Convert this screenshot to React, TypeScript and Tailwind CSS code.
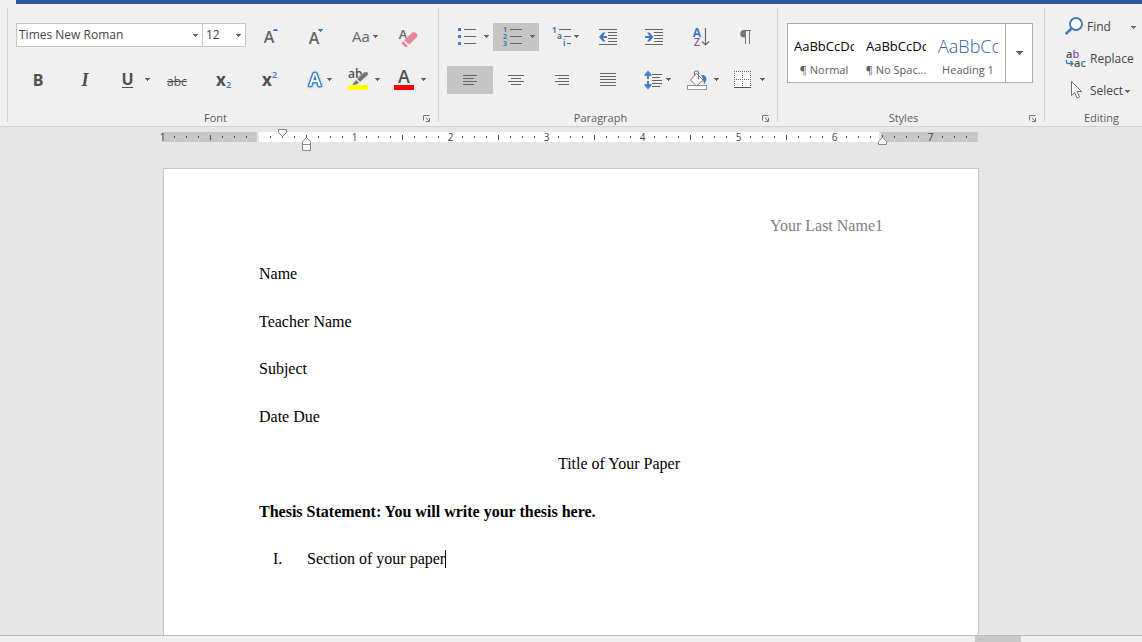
import type { ReactNode } from "react";

const INK = "#666666";
const BLUE = "#3f79b8";
const SANS = "'Open Sans', 'Noto Sans', sans-serif";

function Caret({ x, y = 12 }: { x: number; y?: number }) {
  return <path d={`M${x} ${y}h5v1h-1v1h-1v1h-1v-1h-1v-1h-1z`} fill="#666666" />;
}

function Bars({ rows }: { rows: number[][] }) {
  return (
    <>
      {rows.map(([x, y, w], i) => (
        <rect key={i} x={x} y={y} width={w} height={1} fill={INK} />
      ))}
    </>
  );
}

function Tool({ label, active = false, children }: { label: string; active?: boolean; children: ReactNode }) {
  return (
    <button
      type="button"
      aria-label={label}
      aria-pressed={active}
      className={active ? "h-7 w-[46px] shrink-0 bg-[#c5c5c5]" : "h-7 w-[46px] shrink-0 hover:bg-[#d8d8d8]"}
    >
      <svg viewBox="0 0 46 28" className="block h-7 w-[46px]" fontFamily={SANS} aria-hidden="true">
        {children}
      </svg>
    </button>
  );
}

function Divider() {
  return <div className="mt-1 h-[114px] w-px shrink-0 bg-[#d2d2d2]" />;
}

function GroupLabel({ name }: { name: string }) {
  return (
    <div className="mt-auto flex h-4 items-center pr-2">
      <span className="flex-1 text-center text-[11px] leading-4 text-[#5c5c5c]">{name}</span>
      <button type="button" aria-label={`${name} settings`} className="h-2 w-[7px]">
        <svg viewBox="0 0 7 8" className="block h-2 w-[7px]" aria-hidden="true">
          <path d="M.5 6.500V1.500H6.500M3 4l3 3M6.500 4v3.500H3" fill="none" stroke="#777777" />
        </svg>
      </button>
    </div>
  );
}

function FontGroup() {
  return (
    <section aria-label="Font" className="flex w-[430px] shrink-0 flex-col pt-[19px]">
      <div className="flex pl-2">
        <div className="relative h-6 w-[187px] border border-[#c6c6c6] bg-white">
          <select aria-label="Font name" className="block h-full w-full appearance-none pl-0.5 text-[12px] text-[#444444] outline-none">
            <option>Times New Roman</option>
          </select>
          <svg viewBox="0 0 5 3" className="pointer-events-none absolute right-1 top-2.5 h-[3px] w-[5px]" aria-hidden="true">
            <Caret x={0} y={0} />
          </svg>
        </div>
        <div className="relative mr-px h-6 w-[43px] border border-l-0 border-[#c6c6c6] bg-white">
          <select aria-label="Font size" className="block h-full w-full appearance-none pl-[3px] text-[12px] text-[#444444] outline-none">
            <option>12</option>
          </select>
          <svg viewBox="0 0 5 3" className="pointer-events-none absolute right-1 top-2.5 h-[3px] w-[5px]" aria-hidden="true">
            <Caret x={0} y={0} />
          </svg>
        </div>
        <Tool label="Increase font size">
          <text x="22" y="20" fontSize="16" fontWeight="600" fill={INK} textAnchor="middle">A</text>
          <path d="M26 8h5v-1h-1v-1h-3v1h-1z" fill={BLUE} />
        </Tool>
        <Tool label="Decrease font size">
          <text x="21" y="21" fontSize="16" fontWeight="600" fill={INK} textAnchor="middle">A</text>
          <path d="M25 6h5v1h-1v1h-1v1h-1v-1h-1v-1h-1z" fill={BLUE} />
        </Tool>
        <Tool label="Change case">
          <text x="13" y="19" fontSize="15" fontWeight="500" fill={INK}>Aa</text>
          <Caret x={34} />
        </Tool>
        <Tool label="Clear all formatting">
          <text x="18" y="16" fontSize="13" fontWeight="600" fill={INK} textAnchor="middle">A</text>
          <path d="M18.800 17.200L27.500 9h2.700l2.300 2.300v2.500l-8.200 8.200z" fill="#e8879b" stroke="#f0f0f0" strokeWidth=".6" />
          <path d="M18 18.200l4.800 4.900-.9.900h-1.800l-3.200-3.300v-1.400z" fill="#e8879b" />
        </Tool>
      </div>
      <div className="mt-[15px] flex pl-[7px]">
        <Tool label="Bold">
          <text x="23" y="20" fontSize="16" fontWeight="700" fill="#505050" textAnchor="middle">B</text>
        </Tool>
        <Tool label="Italic">
          <text x="24" y="20" fontSize="18" fontWeight="700" fontStyle="italic" fontFamily="'Liberation Serif', serif" fill="#505050" textAnchor="middle">I</text>
        </Tool>
        <Tool label="Underline">
          <text x="20.500" y="19" fontSize="16" fontWeight="700" fill="#505050" textAnchor="middle">U</text>
          <rect x="15" y="21" width="11" height="1" fill="#505050" />
          <Caret x={38} />
        </Tool>
        <Tool label="Strikethrough">
          <text x="24" y="20" fontSize="12" fill="#505050" textAnchor="middle">abc</text>
          <rect x="14" y="15" width="20" height="1" fill="#505050" />
        </Tool>
        <Tool label="Subscript">
          <text x="22" y="20" fontSize="17" fontWeight="700" fill="#505050" textAnchor="middle">x</text>
          <text x="27" y="22" fontSize="9" fontWeight="600" fill={BLUE}>2</text>
        </Tool>
        <Tool label="Superscript">
          <text x="22" y="20" fontSize="17" fontWeight="700" fill="#505050" textAnchor="middle">x</text>
          <text x="27" y="12" fontSize="9" fontWeight="600" fill={BLUE}>2</text>
        </Tool>
        <Tool label="Text effects">
          <g fontSize="18" fontWeight="600" textAnchor="middle" strokeLinejoin="round">
            <text x="24" y="20" fill="#ffffff" stroke="#3f7fc6" strokeWidth="2.600" paintOrder="stroke" className="drop-shadow-[0_0_1px_#7fb0e6]">A</text>
          </g>
          <Caret x={36} />
        </Tool>
        <Tool label="Text highlight color">
          <text x="11" y="12" fontSize="12" fontWeight="600" fill="#505050">ab</text>
          <path d="M27.500 6h3.500v3l-8 7-3-3z" fill="#707070" stroke="#f0f0f0" strokeWidth=".5" />
          <path d="M19.200 14l2.800 2.800-3 1.700-3.800.3z" fill="#707070" />
          <rect x="11" y="19" width="20" height="5" fill="#ffff00" />
          <Caret x={38} />
        </Tool>
        <Tool label="Font color">
          <text x="21" y="17" fontSize="18" fontWeight="600" fill="#505050" textAnchor="middle">A</text>
          <rect x="11" y="19" width="20" height="5" fill="#ff0000" />
          <Caret x={38} />
        </Tool>
      </div>
      <GroupLabel name="Font" />
    </section>
  );
}

function ParagraphGroup() {
  return (
    <section aria-label="Paragraph" className="flex w-[338px] shrink-0 flex-col pt-[19px]">
      <div className="flex pl-2">
        <Tool label="Bullets">
          {[5, 12, 19].map((y) => (
            <rect key={y} x="11" y={y} width="3" height="3" rx=".6" fill={BLUE} />
          ))}
          <Bars rows={[[17, 6, 12], [17, 13, 12], [17, 20, 12]]} />
          <Caret x={37} />
        </Tool>
        <Tool label="Numbering" active>
          <g fontSize="7" fontWeight="700" fill={BLUE}>
            <text x="10" y="9">1</text>
            <text x="10" y="16">2</text>
            <text x="10" y="23">3</text>
          </g>
          <Bars rows={[[17, 6, 12], [17, 13, 12], [17, 20, 12]]} />
          <Caret x={37} />
        </Tool>
        <Tool label="Multilevel list">
          <g fontSize="8" fontWeight="700" fill={BLUE}>
            <text x="13" y="10">1</text>
            <text x="18" y="16">a</text>
            <text x="24" y="23">i</text>
          </g>
          <Bars rows={[[20, 6, 12], [25, 13, 7], [28, 20, 4]]} />
          <Caret x={35} />
        </Tool>
        <Tool label="Decrease indent">
          <Bars rows={[[14, 6, 18], [23, 9, 9], [23, 12, 9], [23, 15, 9], [23, 18, 9], [14, 21, 18]]} />
          <path d="M14 14l4-4.500h2.500L18 13h4v2h-4l2.500 3.500H18z" fill={BLUE} />
        </Tool>
        <Tool label="Increase indent">
          <Bars rows={[[14, 6, 18], [23, 9, 9], [23, 12, 9], [23, 15, 9], [23, 18, 9], [14, 21, 18]]} />
          <path d="M22.500 14l-4-4.500H16l2.500 3.500H14v2h4.500L16 18.500h2.500z" fill={BLUE} />
        </Tool>
        <Tool label="Sort">
          <text x="20" y="14" fontSize="12" fontWeight="700" fill={BLUE} textAnchor="middle">A</text>
          <text x="20" y="23" fontSize="11" fontWeight="600" fill="#8a56b0" textAnchor="middle">Z</text>
          <path d="M28.500 5v17M25 18.500l3.500 3.500 3.500-3.500" fill="none" stroke={INK} strokeWidth="1.200" />
        </Tool>
        <Tool label="Show formatting marks">
          <path d="M22 7v7.500h-1a3.700 3.700 0 0 1 0-7.500z" fill="#777777" />
          <path d="M20 7.500h8M22.500 7v14M26.500 7v14" fill="none" stroke="#777777" />
        </Tool>
      </div>
      <div className="mt-[15px] flex pl-2">
        <Tool label="Align left" active>
          <Bars rows={[[16, 9, 14], [16, 12, 11], [16, 15, 14], [16, 18, 11]]} />
        </Tool>
        <Tool label="Center">
          <Bars rows={[[15, 9, 16], [18, 12, 10], [15, 15, 16], [18, 18, 10]]} />
        </Tool>
        <Tool label="Align right">
          <Bars rows={[[16, 9, 14], [19, 12, 11], [16, 15, 14], [19, 18, 11]]} />
        </Tool>
        <Tool label="Justify">
          <Bars rows={[[15, 7, 16], [15, 10, 16], [15, 13, 16], [15, 16, 16], [15, 19, 16]]} />
        </Tool>
        <Tool label="Line spacing">
          <path d="M17 4.500l3.500 4v1.500H18V13h-2v-3h-2.500V8.500zM17 23.500l3.500-4V18H18v-3h-2v3h-2.500v1.500z" fill="#4b7ec4" />
          <Bars rows={[[21, 8, 10], [21, 11, 8], [21, 14, 10], [21, 17, 10], [21, 20, 8]]} />
          <Caret x={35} />
        </Tool>
        <Tool label="Shading">
          <path d="M24 9c4-.5 6.500 2 5 6l-2 3.500c-.3-3-.8-6-3-9.500z" fill="#3f79b8" />
          <path d="M19.500 7.500l6.500 6.500-6.500 6-6-6z" fill="#ffffff" stroke="#777777" />
          <path d="M17.500 9.500v-3q0-1.500 2-1.500t2 1.500v7" fill="none" stroke="#777777" strokeWidth="1.200" />
          <rect x="10.500" y="19.500" width="19" height="4" fill="#ffffff" stroke="#999999" />
          <Caret x={37} />
        </Tool>
        <Tool label="Borders">
          <rect x="11" y="5" width="17" height="16" fill="#ffffff" />
          <path d="M11 5.500h17M11 13.500h17M11.500 5v16M19.500 5v16M27.500 5v16" fill="none" stroke="#666666" strokeDasharray="1 1" />
          <rect x="11" y="21" width="17" height="1" fill="#505050" />
          <Caret x={37} />
        </Tool>
      </div>
      <GroupLabel name="Paragraph" />
    </section>
  );
}

function StyleCard({ name, heading = false }: { name: string; heading?: boolean }) {
  return (
    <button type="button" className="flex w-[72px] shrink-0 flex-col items-center px-1.5 pt-3">
      <span
        className={
          heading
            ? "block h-5 w-full overflow-hidden whitespace-nowrap text-left text-[18px] font-light leading-5 text-[#2f5fae]"
            : "block h-5 w-full overflow-hidden whitespace-nowrap text-left text-[13px] leading-5 text-black"
        }
      >
        AaBbCcDc
      </span>
      <span className="mt-1.5 whitespace-nowrap text-[11px] leading-4 text-[#5c5c5c]">{name}</span>
    </button>
  );
}

function StylesGroup() {
  return (
    <section aria-label="Styles" className="flex w-[266px] shrink-0 flex-col pt-[19px]">
      <div className="ml-[9px] flex h-[60px] w-[246px] border border-[#acacac] bg-white">
        <StyleCard name="¶ Normal" />
        <StyleCard name="¶ No Spac..." />
        <StyleCard name="Heading 1" heading />
        <button type="button" aria-label="More styles" className="ml-px flex flex-1 items-center justify-center border-l border-[#acacac]">
          <svg viewBox="0 0 7 4" className="h-1 w-[7px]" aria-hidden="true">
            <path d="M0 0h7v1h-1v1h-1v1h-1v1h-1v-1h-1v-1h-1v-1h-1z" fill="#666666" />
          </svg>
        </button>
      </div>
      <GroupLabel name="Styles" />
    </section>
  );
}

function EditingGroup() {
  return (
    <section aria-label="Editing" className="flex min-w-[97px] flex-1 flex-col pl-5 pt-[7px] text-[12px] text-[#444444]">
      <button type="button" className="flex h-8 items-center">
        <svg viewBox="0 0 22 24" className="h-6 w-[22px]" aria-hidden="true">
          <circle cx="11" cy="9" r="6" fill="#ffffff" stroke={BLUE} strokeWidth="1.800" />
          <path d="M6.500 13.500L.8 19" stroke={BLUE} strokeWidth="2.500" />
        </svg>
        Find
        <svg viewBox="0 0 5 3" className="ml-5 h-[3px] w-[5px]" aria-hidden="true">
          <Caret x={0} y={0} />
        </svg>
      </button>
      <button type="button" className="flex h-8 items-center">
        <svg viewBox="0 0 25 24" className="h-6 w-[25px]" fontFamily={SANS} fontSize="11" fontWeight="600" aria-hidden="true">
          <text x="1" y="11" fill="#505050">
            a<tspan fill="#8a56b0">b</tspan>
          </text>
          <text x="9" y="20" fill="#505050">
            a<tspan fill={BLUE}>c</tspan>
          </text>
          <path d="M1.500 13v2.500q0 1 1.500 1h5M5.500 14l2.500 2.500L5.500 19" fill="none" stroke={BLUE} strokeWidth="1.300" />
        </svg>
        Replace
      </button>
      <button type="button" className="flex h-8 items-center">
        <svg viewBox="0 0 25 24" className="h-6 w-[25px]" aria-hidden="true">
          <path d="M6.500 2.500v14l3.200-3 2.300 5.500 2.500-1-2.300-5.500h4.300z" fill="#ffffff" stroke="#707070" />
        </svg>
        Select
        <svg viewBox="0 0 5 3" className="ml-0.5 h-[3px] w-[5px]" aria-hidden="true">
          <Caret x={0} y={0} />
        </svg>
      </button>
      <div className="mr-1 mt-auto h-4 text-center text-[11px] leading-4 text-[#5c5c5c]">Editing</div>
    </section>
  );
}

function Ruler() {
  const ticks = Array.from({ length: 68 }, (_, i) => i);
  return (
    <div className="relative mx-auto w-[818px] shrink-0 pr-0.5" aria-label="Ruler">
      <div className="flex h-2.5 bg-[#c6c6c6] pl-[95px] pr-[97px]">
        <div className="flex-1 border-x-2 border-[#e6e6e6] bg-white" />
      </div>
      <div className="absolute -left-1.5 top-0 flex h-2.5 items-center">
        {ticks.map((i) => (
          <div key={i} className="flex w-3 justify-center pl-px">
            {i % 8 === 0 ? (
              <span className="text-[10px] font-medium leading-[10px] text-[#444444]">
                {i === 8 ? "" : Math.abs(i / 8 - 1)}
              </span>
            ) : (
              <span className={i % 8 === 4 ? "h-[5px] w-px bg-[#505050]" : "h-0.5 w-px bg-[#505050]"} />
            )}
          </div>
        ))}
      </div>
      <svg viewBox="0 0 9 8" className="absolute -top-[3px] left-[116px] h-2 w-[9px]" aria-hidden="true">
        <path d="M.5.5h8v3l-4 4-4-4z" fill="#ffffff" stroke="#888888" />
      </svg>
      <svg viewBox="0 0 9 14" className="absolute left-[140px] top-[5px] h-3.5 w-[9px]" aria-hidden="true">
        <path d="M4.500.5l4 4v9h-8v-9zM.5 7.500h8" fill="#ffffff" stroke="#888888" />
      </svg>
      <svg viewBox="0 0 9 8" className="absolute left-[716px] top-[5px] h-2 w-[9px]" aria-hidden="true">
        <path d="M4.500.5l4 4v3h-8v-3z" fill="#ffffff" stroke="#888888" />
      </svg>
    </div>
  );
}

export default function App() {
  return (
    <div className="flex h-screen flex-col overflow-hidden bg-[#e6e6e6] font-['Open_Sans','Noto_Sans',sans-serif]">
      <header className="shrink-0 border-b border-[#d2d2d2] bg-[#f0f0f0]">
        <div className="ml-4 h-1 bg-[#2b579a]" />
        <div className="flex h-[122px] overflow-hidden pl-[7px]">
          <Divider />
          <FontGroup />
          <Divider />
          <ParagraphGroup />
          <Divider />
          <StylesGroup />
          <Divider />
          <EditingGroup />
        </div>
      </header>
      <main className="flex min-h-0 flex-1 flex-col overflow-hidden pt-[5px]">
        <Ruler />
        <article className="mx-auto mt-[26px] w-[816px] flex-1 border border-b-0 border-[#c6c6c6] bg-white px-[95px] pt-[45px] font-['Liberation_Serif',serif] text-[16px] leading-6 text-black">
          <p className="text-right text-[#808080]">Your Last Name1</p>
          <div className="mt-6 flex h-[309px] flex-col justify-between">
            <p>Name</p>
            <p>Teacher Name</p>
            <p>Subject</p>
            <p>Date Due</p>
            <h1 className="pl-24 text-center">Title of Your Paper</h1>
            <p className="font-bold">Thesis Statement: You will write your thesis here.</p>
            <div className="flex items-center pl-3.5">
              <span className="w-[34px]">I.</span>
              <span>Section of your paper</span>
              <span className="h-[18px] w-px bg-black" />
            </div>
          </div>
        </article>
      </main>
      <footer className="flex h-[7px] shrink-0 justify-end border-t border-[#bcbcbc] bg-[#f0f0f0] pr-[121px]">
        <div className="w-[46px] bg-[#c8c8c8]" />
      </footer>
    </div>
  );
}
